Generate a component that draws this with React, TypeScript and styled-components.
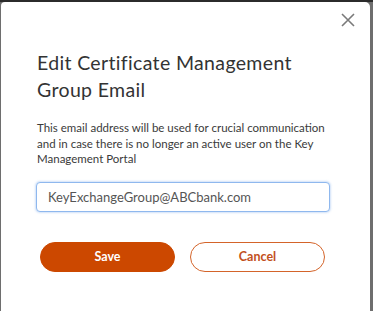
import { createGlobalStyle, styled } from 'styled-components';

const GlobalStyle = createGlobalStyle`
    html, body {
        margin: 0;
        padding: 0;
        background-color: #6e6e6e;
        font-family: Lato, 'Open Sans', sans-serif;
    }
    body {
        border-top: 2px solid #2b2b2b;
    }
`;

const Backdrop = styled.div`
    display: flex;
    padding-left: 1px;
    height: 309px;
`;

const Dialog = styled.div`
    width: 369px;
    background-color: #ffffff;
    border-radius: 4px 5px 0 0;
    display: flex;
    flex-direction: column;
    padding: 10px 0 0 0;
    box-sizing: border-box;
`;

const TopBar = styled.div`
    display: flex;
    justify-content: flex-end;
    padding-right: 14px;
    height: 16px;
`;

const CloseBtn = styled.button`
    background: none;
    border: none;
    padding: 0;
    width: 16px;
    height: 16px;
    cursor: pointer;
    svg {
        width: 16px;
        height: 16px;
        display: block;
    }
`;

const Content = styled.div`
    display: flex;
    flex-direction: column;
    padding: 21px 42px 0 36px;
`;

const Title = styled.h2`
    margin: 0;
    font-weight: 400;
    font-size: 19.5px;
    letter-spacing: 0.35px;
    line-height: 27px;
    color: #333333;
`;

const Description = styled.p`
    margin: 17px 0 0 0;
    font-size: 11.5px;
    line-height: 15.5px;
    color: #3a3a3a;
`;

const EmailInput = styled.input`
    margin: 15px 0 0 -1px;
    width: 294px;
    height: 30px;
    box-sizing: border-box;
    border: 1px solid #8fb8ee;
    border-radius: 4px;
    box-shadow: 0 0 2px 1px rgba(120, 170, 235, 0.35);
    outline: none;
    padding: 0 11px;
    font-family: Lato, 'Open Sans', sans-serif;
    font-size: 13px;
    color: #555555;
`;

const Actions = styled.div`
    display: flex;
    gap: 15px;
    margin: 30px 0 0 3px;
`;

const PillButton = styled.button<{ $primary?: boolean }>`
    width: 135px;
    height: 30px;
    border-radius: 15px;
    box-sizing: border-box;
    font-family: Lato, 'Open Sans', sans-serif;
    font-weight: 700;
    font-size: 12.5px;
    cursor: pointer;
    border: 1px solid ${(p) => (p.$primary ? '#cc4800' : '#d4642a')};
    background-color: ${(p) => (p.$primary ? '#cc4800' : '#ffffff')};
    color: ${(p) => (p.$primary ? '#ffffff' : '#c2501c')};
`;

export default function App() {
    return (
        <>
            <GlobalStyle />
            <Backdrop>
                <Dialog>
                    <TopBar>
                        <CloseBtn aria-label="Close">
                            <svg viewBox="0 0 16 16" fill="none" stroke="#7a7a7a" strokeWidth="1.6">
                                <path d="M2 2 L14 14 M14 2 L2 14" />
                            </svg>
                        </CloseBtn>
                    </TopBar>
                    <Content>
                        <Title>
                            Edit Certificate Management
                            <br />
                            Group Email
                        </Title>
                        <Description>
                            This email address will be used for crucial communication and in case there is no
                            longer an active user on the Key Management Portal
                        </Description>
                        <EmailInput type="email" defaultValue="KeyExchangeGroup@ABCbank.com" />
                        <Actions>
                            <PillButton $primary>Save</PillButton>
                            <PillButton>Cancel</PillButton>
                        </Actions>
                    </Content>
                </Dialog>
            </Backdrop>
        </>
    );
}
